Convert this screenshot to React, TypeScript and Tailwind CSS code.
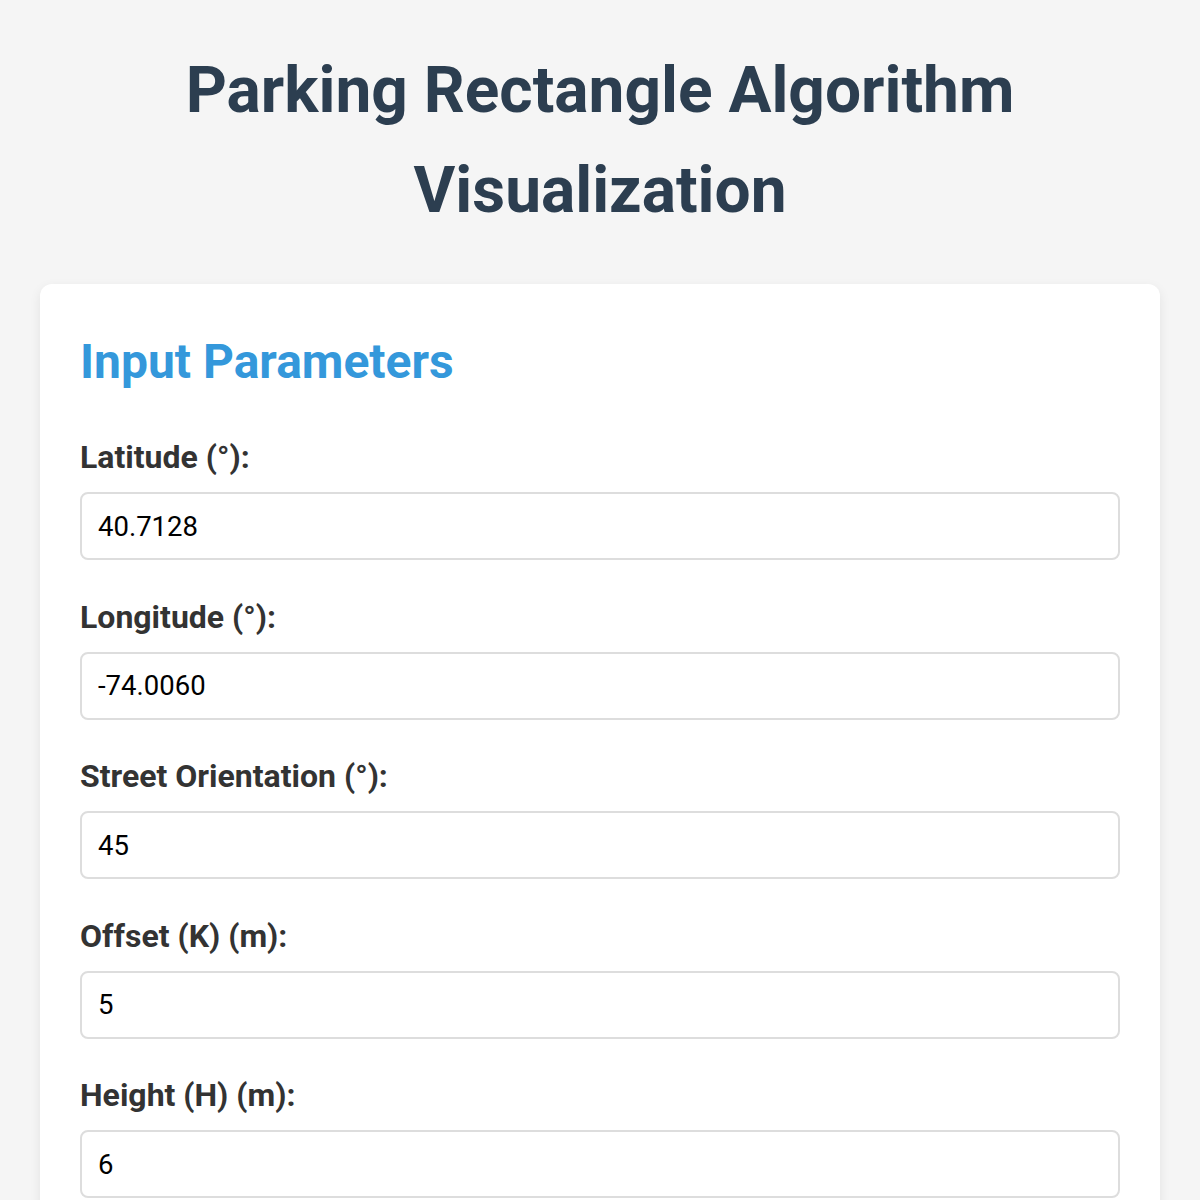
import React from "react";

const fields = [
  { label: "Latitude (°):", value: "40.7128" },
  { label: "Longitude (°):", value: "-74.0060" },
  { label: "Street Orientation (°):", value: "45" },
  { label: "Offset (K) (m):", value: "5" },
  { label: "Height (H) (m):", value: "6" },
  { label: "Width (W) (m):", value: "3" },
];

export default function App() {
  return (
    <div
      className="min-h-screen bg-[#f5f5f5] px-[40px] pt-[41px] pb-[40px]"
      style={{ fontFamily: "Roboto, 'Noto Sans', sans-serif" }}
    >
      <h1 className="text-center text-[64px] leading-[100px] font-bold text-[#2c3e50] mb-[43px]">
        Parking Rectangle Algorithm Visualization
      </h1>
      <div className="bg-white rounded-[12px] shadow-[0_4px_12px_rgba(0,0,0,0.08)] p-[40px]">
        <h2 className="text-[48px] leading-[56px] font-bold text-[#3498db] mt-[10px] mb-[48px]">
          Input Parameters
        </h2>
        <div className="flex flex-col">
          {fields.map((f) => (
            <div key={f.label} className="flex flex-col mb-[37.5px]">
              <label className="text-[32px] leading-[38px] font-bold text-[#333333] mb-[16px]">
                {f.label}
              </label>
              <input
                type="text"
                defaultValue={f.value}
                className="box-border h-[68px] w-full border-2 border-[#dddddd] rounded-[8px] px-[16px] text-[27.5px] text-black outline-none bg-white"
              />
            </div>
          ))}
        </div>
      </div>
    </div>
  );
}
